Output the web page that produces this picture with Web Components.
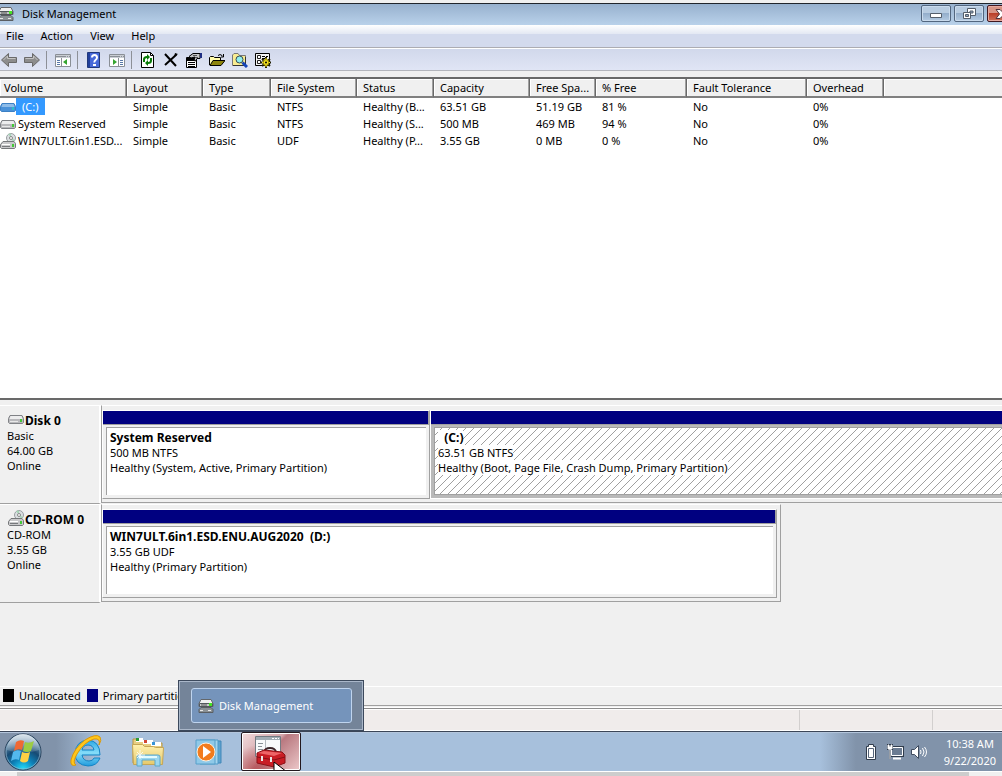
<!DOCTYPE html>
<html lang="en">
<head>
<meta charset="utf-8">
<meta name="viewport" content="width=device-width, initial-scale=1">
<title>Disk Management</title>
<style>
  html, body {
    margin: 0;
    height: 100%;
    overflow: hidden;
  }

  body {
    font: 11px/15px "Noto Sans", "Open Sans", sans-serif;
    color: #000;
    background: #f0f0f0;
  }

  disk-partition b {
    font-size: 12px;
  }
</style>
</head>
<body>
<desktop-screen>
  <title-bar slot="window">Disk Management</title-bar>
  <menu-bar slot="window"></menu-bar>
  <tool-bar slot="window"></tool-bar>
  <volume-list slot="window"></volume-list>
  <disk-graph slot="window">
    <disk-row icon="drive" name="Disk 0" kind="Basic" size="64.00 GB" state="Online">
      <disk-partition class="small">
        <b>System Reserved</b>
        <span>500 MB NTFS</span>
        <span>Healthy (System, Active, Primary Partition)</span>
      </disk-partition>
      <disk-partition selected>
        <b>&nbsp; (C:)</b>
        <span>63.51 GB NTFS</span>
        <span>Healthy (Boot, Page File, Crash Dump, Primary Partition)</span>
      </disk-partition>
    </disk-row>
    <disk-row icon="cdrom" name="CD-ROM 0" kind="CD-ROM" size="3.55 GB" state="Online" short>
      <disk-partition>
        <b>WIN7ULT.6in1.ESD.ENU.AUG2020&nbsp; (D:)</b>
        <span>3.55 GB UDF</span>
        <span>Healthy (Primary Partition)</span>
      </disk-partition>
    </disk-row>
  </disk-graph>
  <disk-legend slot="window"></disk-legend>
  <status-strip slot="window"></status-strip>
  <task-bar slot="taskbar"></task-bar>
</desktop-screen>

<script>
const ICONS = {
  back: `<path d="M.5 8 7.500 1.500v4h8v5h-8v4z" fill="#8d8d8d" stroke="#6a6a6a"/><path d="M2.500 8 6.500 4v2.500h8" fill="none" stroke="#c4c4c4"/>`,
  forward: `<path d="M15.500 8 8.500 1.500v4h-8v5h8v4z" fill="#8d8d8d" stroke="#6a6a6a"/><path d="M13.500 8 9.500 4v2.500h-8" fill="none" stroke="#c4c4c4"/>`,
  tree: `<path d="M.5 2.500h15v12H.5z" fill="#fff" stroke="#8a8f96"/><path d="M1 3h14v3H1z" fill="#c9cdd3"/><path d="M1 4.500h10M12 4.500h1M14 4.500h1" stroke="#8a8f96"/><path d="M6.500 6v8" stroke="#8a8f96"/><path d="M2 8.500h3M2 10.500h3M2 12.500h3" stroke="#5878a8"/><path d="M12 7v6l-4-3z" fill="#35a430"/>`,
  pane: `<path d="M.5 2.500h15v12H.5z" fill="#fff" stroke="#8a8f96"/><path d="M1 3h14v3H1z" fill="#c9cdd3"/><path d="M1 4.500h10M12 4.500h1M14 4.500h1" stroke="#8a8f96"/><path d="M9.500 6v8" stroke="#8a8f96"/><path d="M11 8.500h3M11 10.500h3M11 12.500h3" stroke="#5878a8"/><path d="M4 7v6l4-3z" fill="#35a430"/>`,
  help: `<path d="M1.500.5h12v15h-12z" fill="#4668d8" stroke="#20387c"/><path d="M3 1v14" stroke="#203f9c" stroke-width="2"/><path d="M6 5.500Q6 3 8.500 3T11 5.500Q11 7 9.500 8t-1 2.500" fill="none" stroke="#fff" stroke-width="2"/><path d="M7 12h3v2H7z" fill="#fff"/>`,
  refresh: `<path d="M1.500.5h9l3 3v12h-12z" fill="#fff" stroke="#000"/><path d="M10.500.5v3h3" fill="none" stroke="#000"/><path d="M4 10V7.500Q4 5 7 5M11 6v2.500Q11 11 8 11" fill="none" stroke="#087b08" stroke-width="2"/><path d="M7 2v6l3-3zM8 8v6l-3-3z" fill="#087b08"/>`,
  remove: `<path d="M2 2l11 12M13.500 2.500 2 13" stroke="#000" stroke-width="2" fill="none"/><path d="M12 1l3 1-4 3z"/>`,
  properties: `<path d="M.5 5.500h10v10H.5z" fill="#fff" stroke="#000"/><path d="M1 6h9v3H1z"/><path d="M2 10.500h7M2 12.500h7M2 14.500h7" stroke="#000"/><path d="M3 4.500 7 1.500h7v5h-3L9.500 9 8 8.500 9 5 5 6z" fill="#c7c7c7" stroke="#000"/><path d="M7 3.500h4M9 5.500h3" stroke="#555"/><path d="M14 1h2v5h-2z" fill="#1f2e83"/>`,
  open: `<path d="M.5 13V5.500l1-1h3l1 1h6v3" fill="#fffbaa" stroke="#000"/><path d="M1 13.500 4 8.500h12l-4 5z" fill="#8d850e" stroke="#000"/><path d="M9 3.500q2-2 4 0l1 1M14.500 2v3H12" stroke="#000" fill="none"/>`,
  find: `<path d="M.5 13.500V3L2 1.500h4l1.500 2h6v10z" fill="#f8ec92" stroke="#777"/><path d="M1 13.500h12.500V5" fill="none" stroke="#333"/><circle cx="7.500" cy="7.500" r="3.500" fill="#8eeeee" stroke="#3a4a52"/><path d="M10.500 10.500l4.500 4.500" stroke="#1444b8" stroke-width="3"/>`,
  settings: `<path d="M.5 1.500h14v12H.5z" fill="#f4f4f4" stroke="#000"/><path d="M2.500 3.500h3v3h-3zM2.500 8.500h3v3h-3z" fill="#fff" stroke="#222"/><path d="M7 4.500h3M11 4.500h2M7 6.500h3" stroke="#000"/><path d="M11 5v11M6 10.500h10M7 7l8 7M15 7l-8 7" stroke="#201d00" stroke-width="2"/><circle cx="11" cy="10.500" r="3" fill="#f5e11e" stroke="#857a00"/><path d="M11 6v2M11 13v2M7 10.500h1M14 10.500h1" stroke="#f5e11e"/><circle cx="11" cy="10.500" r="1"/>`,
  drive: `<path d="M2 4.500h12l1.500 3v4l-1 1h-13l-1-1v-4z" fill="#b9b9bc" stroke="#808286"/><path d="M2.500 5h11l1 3h-13z" fill="#ededee"/><path d="M2 10.500h8" stroke="#e8e8e8"/><path d="M12 8h2v3h-2z" fill="#43c936"/>`,
  selected: `<path d="M2 4.500h12l1.500 3v4l-1 1h-13l-1-1v-4z" fill="#4a91d8" stroke="#3c80c4"/><path d="M2.500 5h11l1 3h-13z" fill="#8ebce8"/><path d="M12 8h2v3h-2z" fill="#2ac0c9"/>`,
  cdrom: `<circle cx="11" cy="5" r="4.500" fill="#dadfe1" stroke="#9a9ea2"/><path d="M11 5 8 1l3-.5zM11 5l4 2-2 2z" fill="#a6d6b7"/><circle cx="11" cy="5" r="1.500" fill="#fff" stroke="#888"/><path d="M3 8.500h11l1.500 2v4l-1 1h-13l-1-1v-3z" fill="#c9c9cb" stroke="#76787b"/><path d="M2 11.500h8" stroke="#fff"/><path d="M2 13.500h8" stroke="#77797c"/><path d="M12 11h2v3h-2z" fill="#43c936"/>`,
  disks: `<path d="M3 1.500h10l2 4v3H1v-3z" fill="#f0f0ef" stroke="#63676b"/><path d="M1.500 5.500h13v3h-13z" fill="#c9cbcc" stroke="#53575b"/><path d="M3 9.500h10l2 2v3H1v-3z" fill="#8b9195" stroke="#5a5e62"/><path d="M3 7h6" stroke="#555"/><path d="M11 5h3v3h-3z" fill="#45e424"/><path d="M2 12.500h3M10 12.500h3" stroke="#e8e8e8"/>`,
  minimize: `<path d="M2.500 7.500h11v4h-11z" fill="#fff" stroke="#545e6b"/>`,
  restore: `<path d="M6.500 2.500h8v7h-8z" fill="#fff" stroke="#545e6b"/><path d="M9 5h3v2H9z" fill="#8ea5c1" stroke="#545e6b"/><path d="M2.500 6.500h7v6h-7z" fill="#fff" stroke="#545e6b"/><path d="M4.500 8.500h3v2h-3z" fill="#8ea5c1" stroke="#545e6b"/>`,
  close: `<path d="M2 3.500h4l2 2 2-2h4L10.500 8l3.500 4.500h-4l-2-2-2 2H2L5.500 8z" fill="#fff" stroke="#50323c"/>`
}

const define = (name, css, html) => {
  customElements.define(name, class extends HTMLElement {
    connectedCallback () {
      if (this.shadowRoot) return
      this.attachShadow({ mode: 'open' })
      this.shadowRoot.innerHTML = `
        <style>
          :host, * { box-sizing: border-box; }
          button { font: inherit; color: inherit; border: 0; background: none; padding: 0; margin: 0; }
          ${css}
        </style>
        ${typeof html === 'function' ? html(this) : html}`
    }
  })
}

define('app-icon', `
  :host { display: inline-block; flex: none; width: 16px; height: 16px; }
  svg { display: block; width: 100%; height: 100%; }
`, el => `<svg viewBox="0 0 16 16" aria-hidden="true">${ICONS[el.getAttribute('name')]}</svg>`)

define('desktop-screen', `
  :host { display: flex; flex-direction: column; height: 100vh; overflow: hidden; }
  main { flex: 1; min-height: 0; display: flex; flex-direction: column; border-top: 1px solid #20252c; margin-top: 3px; }
  footer { flex: none; height: 4px; padding: 0 33px 0 17px; }
  footer div { height: 100%; background: #cdcdcd; }
`, `<main><slot name="window"></slot></main><slot name="taskbar"></slot><footer><div></div></footer>`)

define('title-bar', `
  :host { display: flex; flex: none; height: 21px; background: linear-gradient(#97b1ce, #b9d1ea); overflow: hidden; }
  app-icon { margin: 2px 0; }
  app-icon.logo { margin-left: -2px; }
  h1 { flex: 1; margin: 0 0 0 8px; font: inherit; line-height: 20px; }
  .controls { display: flex; flex: 0 0 81px; gap: 3px; overflow: hidden; }
  button { flex: none; display: grid; place-items: center; width: 30px; height: 17px; margin-top: 1px; border: 1px solid #52667f; border-radius: 2px;
    box-shadow: inset 0 0 0 1px #cadbed; background: linear-gradient(#b8cce1 50%, #94aecb 50%, #b4cbe3); }
  button app-icon { margin: 0; }
  .close { border-color: #401820; box-shadow: inset 0 0 0 1px #e6aaa0; background: linear-gradient(#d79485 45%, #b83a24 45%, #cf7059); }
`, `
  <app-icon class="logo" name="disks"></app-icon>
  <h1><slot></slot></h1>
  <div class="controls">
    <button aria-label="Minimize"><app-icon name="minimize"></app-icon></button>
    <button aria-label="Restore"><app-icon name="restore"></app-icon></button>
    <button class="close" aria-label="Close"><app-icon name="close"></app-icon></button>
  </div>`)

define('menu-bar', `
  :host { display: block; flex: none; height: 23px; border-bottom: 1px solid #acacb2; background: linear-gradient(#fff, #e3e8f3 9px, #d3daed 9px, #d3daed); }
  nav { display: flex; gap: 1px; margin-left: -2px; }
  button { padding: 0 8px; line-height: 22px; }
`, `<nav>${['File', 'Action', 'View', 'Help'].map(m => `<button>${m}</button>`).join('')}</nav>`)

define('tool-bar', `
  :host { display: block; flex: none; height: 23px; border-top: 1px solid #fff; border-bottom: 1px solid #b3b5bc; background: linear-gradient(#d1d8eb, #e0e5f5); }
  div { display: flex; align-items: center; height: 22px; margin-left: -3px; }
  button { width: 23px; height: 22px; display: grid; place-items: center; }
  i { width: 8px; height: 18px; background: linear-gradient(90deg, transparent 3px, #8d9097 3px, #8d9097 4px, transparent 4px); }
`, `<div role="toolbar">${[
  ['back', 'Back'], ['forward', 'Forward'], null, ['tree', 'Console tree'], null,
  ['help', 'Help'], ['pane', 'Action pane'], null, ['refresh', 'Refresh'], ['remove', 'Delete'],
  ['properties', 'Properties'], ['open', 'Open'], ['find', 'Find'], ['settings', 'Settings']
].map(t => t ? `<button aria-label="${t[1]}"><app-icon name="${t[0]}"></app-icon></button>` : '<i></i>').join('')}</div>`)

const COLUMNS = [
  ['Volume', 127], ['Layout', 76], ['Type', 68], ['File System', 86], ['Status', 77], ['Capacity', 96],
  ['Free Spa...', 66], ['% Free', 91], ['Fault Tolerance', 120], ['Overhead', 77]
]
const VOLUMES = [
  ['selected', '(C:)', 'Simple', 'Basic', 'NTFS', 'Healthy (B...', '63.51 GB', '51.19 GB', '81 %', 'No', '0%'],
  ['drive', 'System Reserved', 'Simple', 'Basic', 'NTFS', 'Healthy (S...', '500 MB', '469 MB', '94 %', 'No', '0%'],
  ['cdrom', 'WIN7ULT.6in1.ESD...', 'Simple', 'Basic', 'UDF', 'Healthy (P...', '3.55 GB', '0 MB', '0 %', 'No', '0%']
]

define('volume-list', `
  :host { display: block; flex: 0 1 321px; margin-top: 6px; border-top: 2px solid #696969; background: #fff; overflow: hidden; }
  table { width: 100%; table-layout: fixed; border-collapse: separate; border-spacing: 0; }
  th { height: 19px; padding: 0 0 0 6px; text-align: left; font-weight: normal; background: #f0f0f0; white-space: nowrap;
    border-right: 1px solid #696969; border-bottom: 2px solid #808080; box-shadow: inset -1px 0 #a0a0a0, inset 1px 1px #fff; }
  th:first-child { padding-left: 4px; }
  th:last-child { border-right: 0; box-shadow: inset 1px 1px #fff; }
  td { height: 17px; padding: 0 0 0 6px; line-height: 17px; white-space: nowrap; }
  td:first-child { padding: 0; }
  .volume { display: flex; align-items: center; gap: 2px; height: 17px; }
  .picked span { padding: 0 6px; margin-left: -2px; background: #3399ff; color: #fff; }
`, `
  <table>
    <colgroup>${COLUMNS.map(c => `<col style="width: ${c[1]}px">`).join('')}<col></colgroup>
    <thead><tr>${COLUMNS.map(c => `<th>${c[0]}</th>`).join('')}<th></th></tr></thead>
    <tbody>${VOLUMES.map(([icon, name, ...rest]) => `
      <tr>
        <td><div class="volume ${icon === 'selected' ? 'picked' : ''}"><app-icon name="${icon}"></app-icon><span>${name}</span></div></td>
        ${rest.map(v => `<td>${v}</td>`).join('')}
        <td></td>
      </tr>`).join('')}
    </tbody>
  </table>`)

define('disk-graph', `
  :host { display: block; flex: 1; min-height: 0; border-top: 2px solid #696969; padding-top: 5px; overflow: hidden; }
`, '<slot></slot>')

define('disk-row', `
  :host { display: flex; height: 99px; }
  .label { flex: 0 0 101px; padding: 7px 0 0 7px; border: solid; border-width: 1px 2px 1px 0; border-color: #fff #fff #a0a0a0; }
  .label div { white-space: nowrap; }
  .name { display: flex; gap: 1px; height: 15px; font-size: 12px; font-weight: bold; }
  .name app-icon { margin: -2px 0 0 1px; }
  .parts { flex: 1; min-width: 0; display: flex; height: 98px; padding: 4px 0 3px; border: solid; border-width: 1px 0 1px 1px; border-color: #fff #a0a0a0 #a0a0a0; }
  :host([short]) .parts { flex: 0 1 680px; padding-right: 3px; border-right-width: 1px; }
  ::slotted(disk-partition) { flex: 1; min-width: 0; }
  ::slotted(.small) { flex: 0 0 328px; }
`, el => `
  <div class="label">
    <div class="name"><app-icon name="${el.getAttribute('icon')}"></app-icon>${el.getAttribute('name')}</div>
    <div>${el.getAttribute('kind')}</div>
    <div>${el.getAttribute('size')}</div>
    <div>${el.getAttribute('state')}</div>
  </div>
  <div class="parts"><slot></slot></div>`)

define('disk-partition', `
  :host { display: flex; flex-direction: column; border: 1px solid; border-color: #fff #a0a0a0 #a0a0a0 #fff; }
  .bar { flex: none; height: 14px; background: #000080; border-bottom: 1px solid #a0a0a0; border-right: 1px solid #a0a0a0; }
  .body { flex: 1; margin: 2px 3px 3px; padding: 2px 0 0 3px; background: #fff; border: solid #a0a0a0; border-width: 1px 0 0 1px; }
  ::slotted(*) { display: table; white-space: nowrap; }
  :host([selected]) { border-right: 0; border-bottom-color: #fff; background: #b9b9b9; }
  :host([selected]) .bar { border-right: 0; }
  :host([selected]) .body { margin-right: 0; border-bottom-width: 1px;
    background: #fff url("data:image/svg+xml,%3Csvg xmlns='http://www.w3.org/2000/svg' width='8' height='8' shape-rendering='crispEdges'%3E%3Cpath d='M7 0h1v1H7zM6 1h1v1H6zM5 2h1v1H5zM4 3h1v1H4zM3 4h1v1H3zM2 5h1v1H2zM1 6h1v1H1zM0 7h1v1H0z' fill='%23a0a0a0'/%3E%3C/svg%3E") -1px 0; }
  :host([selected]) ::slotted(*) { background: #fff; }
`, `<div class="bar"></div><div class="body"><slot></slot></div>`)

define('disk-legend', `
  :host { display: flex; flex: none; align-items: center; height: 20px; padding: 0 0 1px 3px; border-top: 1px solid #fff; border-bottom: 1px solid #a0a0a0; }
  span { display: flex; align-items: center; gap: 5px; margin-right: 6px; white-space: nowrap; }
  i { width: 11px; height: 13px; background: #000; }
  .primary i { background: #000080; }
`, `<span><i></i>Unallocated</span><span class="primary"><i></i>Primary partition</span>`)

define('status-strip', `
  :host { display: flex; flex: none; height: 24px; margin-top: 1px; border-top: 1px solid #fff; border-bottom: 1px solid #fff; background: #f0eceb; box-shadow: inset 0 1px #8c8c8c, inset 0 2px #fff; }
  div { flex: 0 0 70px; border-left: 1px solid #d2cfce; margin-top: 2px; }
  .message { flex: 1; border: 0; }
  .wide { flex-basis: 133px; }
`, '<div class="message"></div><div class="wide"></div><div></div>')

define('task-preview', `
  :host { display: block; width: 186px; height: 51px; padding: 7px 11px 7px 12px; background: #748499; border: 1px solid #3c495c; box-shadow: inset 0 0 0 1px #aab7c9; }
  button { display: flex; align-items: center; gap: 5px; width: 100%; height: 35px; padding: 0 6px; border: 1px solid #bfd4ee; border-radius: 3px; background: #7594bb; color: #fff; }
`, `<button><app-icon name="disks"></app-icon><slot></slot></button>`)

define('task-bar', `
  :host { position: relative; display: flex; flex: none; height: 41px; border-top: 1px solid #3b4658; border-bottom: 1px solid #fff;
    box-shadow: inset 0 1px #b4c6dc; background: linear-gradient(90deg, #8193aa 56px, #a7c0dc 100px, #a7c0dc calc(100% - 182px), #8193aa calc(100% - 146px)); }
  svg { display: block; overflow: visible; }
  .start { width: 56px; padding: 1px 0 0 4px; }
  .task { width: 61px; display: grid; place-items: center; }
  .group { position: relative; padding: 0 0 0 2px; }
  .group .task { width: 60px; height: 39px; border: 1px solid #23181e; border-radius: 2px; overflow: hidden;
    background: radial-gradient(circle at 15px 38px, #b7575c, transparent 26px), linear-gradient(135deg, #f2dcdd, #d4a4a9 45%, #b97980 50%, #edc9ca); box-shadow: inset 0 0 0 1px #fff; }
  task-preview { position: absolute; bottom: calc(100% + 1px); left: 50%; margin-left: -92px; }
  .tray { display: flex; align-items: center; gap: 8px; margin-left: auto; padding-right: 6px; color: #fff; }
  .clock { margin-left: 9px; line-height: 17px; text-align: center; color: #fff; }
  .clock div { white-space: nowrap; }
`, `
  <button class="start" aria-label="Start">
    <svg width="38" height="38" viewBox="0 0 38 38">
      <defs>
        <radialGradient id="orb" cx=".5" cy="1" r=".9"><stop offset="0" stop-color="#25e6ff"/><stop offset=".35" stop-color="#0d83ba"/><stop offset=".65" stop-color="#174a73"/><stop offset="1" stop-color="#7d9fb9"/></radialGradient>
        <linearGradient id="shine" x2="0" y2="1"><stop stop-color="#fff" stop-opacity=".7"/><stop offset="1" stop-color="#fff" stop-opacity=".1"/></linearGradient>
      </defs>
      <circle cx="19" cy="19" r="18" fill="url(#orb)" stroke="#243e58"/>
      <circle cx="19" cy="19" r="17" fill="none" stroke="#97b9d0" opacity=".7"/>
      <path d="M3 17a16 16 0 0 1 32 0q-16 6-32 0" fill="url(#shine)"/>
      <path d="M12 9q4-3 8-1l-2 9q-4-2-8 1z" fill="#ef6933"/>
      <path d="M21 9q4 2 9-1l-3 10q-4 2-8 0z" fill="#9ccc43"/>
      <path d="M9 19q4-3 8-1l-2 9q-4-2-8 1z" fill="#53b9ed"/>
      <path d="M18 19q4 2 8 0l-2 9q-4 3-8 0z" fill="#ffd044"/>
    </svg>
  </button>
  <button class="task" aria-label="Internet Explorer">
    <svg width="32" height="34" viewBox="0 0 32 34">
      <defs><linearGradient id="ie" x2="0" y2="1"><stop stop-color="#2aa6e4"/><stop offset=".5" stop-color="#85ddf9"/><stop offset="1" stop-color="#209bdd"/></linearGradient></defs>
      <path d="M29 20H11q1 6 7 6 4 0 5-3h6q-3 8-12 8Q4 30 4 18 5 6 17 5q12 1 12 15zM11 15h12q-1-5-6-5t-6 5z" fill="url(#ie)" stroke="#1483c4" fill-rule="evenodd"/>
      <path d="M28 10q2-7-5-6Q13 7 6 19 1 28 5 30q-6 2-5-5Q3 13 14 5 25-2 29 2q2 3-1 8z" fill="#ffc61a" stroke="#da9709"/>
    </svg>
  </button>
  <button class="task" aria-label="Windows Explorer">
    <svg width="34" height="32" viewBox="0 0 34 32">
      <defs><linearGradient id="folder" x2="0" y2="1"><stop stop-color="#fff1b1"/><stop offset="1" stop-color="#e6c96b"/></linearGradient></defs>
      <path d="M2 27V3h8l2 2h8l2 2h9v20z" fill="#e8cf83" stroke="#b89643"/>
      <path d="M5 2h7v4H5z" fill="#fff"/><path d="M5 2h3v3H5z" fill="#2a9a37"/>
      <path d="M12 4h10v4H12z" fill="#fff"/><path d="M13 4h3v3h-3z" fill="#d24735"/>
      <path d="M20 6h10v4H20z" fill="#fff"/><path d="M21 6h3v3h-3z" fill="#3794d8"/>
      <path d="M1.500 8.500h10l2 2h9l2 1h8l-1 17h-29z" fill="url(#folder)" stroke="#c6a656"/>
      <path d="M6 30V21q0-2 2-2h19q2 0 2 2v9h-5v-6H11v6z" fill="#9bd7ef" stroke="#5ca7cb"/>
      <path d="M8 21h18" stroke="#e3fbff" stroke-width="2"/><path d="M9 14v9M5 19h9M6 16l6 6M12 16l-6 6" stroke="#fff" opacity=".8"/>
    </svg>
  </button>
  <button class="task" aria-label="Windows Media Player">
    <svg width="28" height="28" viewBox="0 0 28 28">
      <path d="M9 3h17v22H9z" fill="#5fa4d1" stroke="#4287b7"/><path d="M5 2h18v24H5z" fill="#a5d4ed" stroke="#4e9bc8"/><path d="M1 2h19v24H1z" fill="#8fc9e8" stroke="#579fca"/>
      <circle cx="11" cy="14" r="9" fill="#f27c1e" stroke="#fff1df"/><path d="M8 8v12l8-6z" fill="#fff"/>
    </svg>
  </button>
  <div class="group">
    <button class="task" aria-label="Disk Management">
      <svg width="34" height="36" viewBox="0 0 34 36">
        <path d="M1.500 2.500h25v20h-25z" fill="#f8fafb" stroke="#737b82"/><path d="M2 3h24v3H2z" fill="#a2adb5"/><path d="M18 4.500h2M21 4.500h2M24 4.500h1" stroke="#fff"/>
        <path d="M4 9.500h5M4 12.500h4M4 15.500h5M4 18.500h3" stroke="#8a9298"/><path d="M11.500 6v16" stroke="#b4babf"/>
        <path d="M10 18q1-4 6-4t6 4" fill="none" stroke="#3a2529" stroke-width="2"/>
        <path d="M3 19l7-3 18 2 3 3v8l-11 4L3 29z" fill="#c91d25" stroke="#8c1017"/><path d="M4 19l6-2 18 2-8 3z" fill="#ee6467"/><path d="M3 23l17 3 11-3" fill="none" stroke="#861016"/>
        <path d="M8 22v5M17 23v5" stroke="#e9e9e9" stroke-width="2"/>
        <path d="M20 28v16l4-4 3 6 3-2-3-6h6z" fill="#fff" stroke="#000"/>
      </svg>
    </button>
    <task-preview>Disk Management</task-preview>
  </div>
  <div class="tray">
    <svg width="16" height="16" viewBox="0 0 16 16" role="img" aria-label="Battery"><path d="M5.500.5h5v2h2v13h-9v-13h2z" fill="#fff" stroke="#303c4c"/><path d="M5.500 4.500h5v9h-5z" fill="#fff" stroke="#56657a"/></svg>
    <svg width="16" height="16" viewBox="0 0 16 16" role="img" aria-label="Network"><path d="M4 3h12v9H4z" fill="#5f7187" stroke="#303c4c" stroke-width="2"/><path d="M4.500 3.500h11v8h-11z" fill="#6b7c92" stroke="#fff"/><path d="M6 14.500h8" stroke="#fff" stroke-width="2"/><path d="M0 0h6v6H4v9H2V6H0z" fill="#303c4c"/><path d="M1 1h1v2h2V1h1v4H1zM3 5v10" fill="#fff" stroke="#fff"/></svg>
    <svg width="16" height="16" viewBox="0 0 16 16" role="img" aria-label="Volume"><path d="M.5 5.500h3l4-4v13l-4-4h-3z" fill="#fff" stroke="#3e4b5e"/><path d="M9.500 6q1 2 0 4M11.500 4q3 4 0 8M13.500 3q4 5 0 10" fill="none" stroke="#fff"/></svg>
    <div class="clock"><div>10:38 AM</div><div>9/22/2020</div></div>
  </div>`)
</script>
</body>
</html>
